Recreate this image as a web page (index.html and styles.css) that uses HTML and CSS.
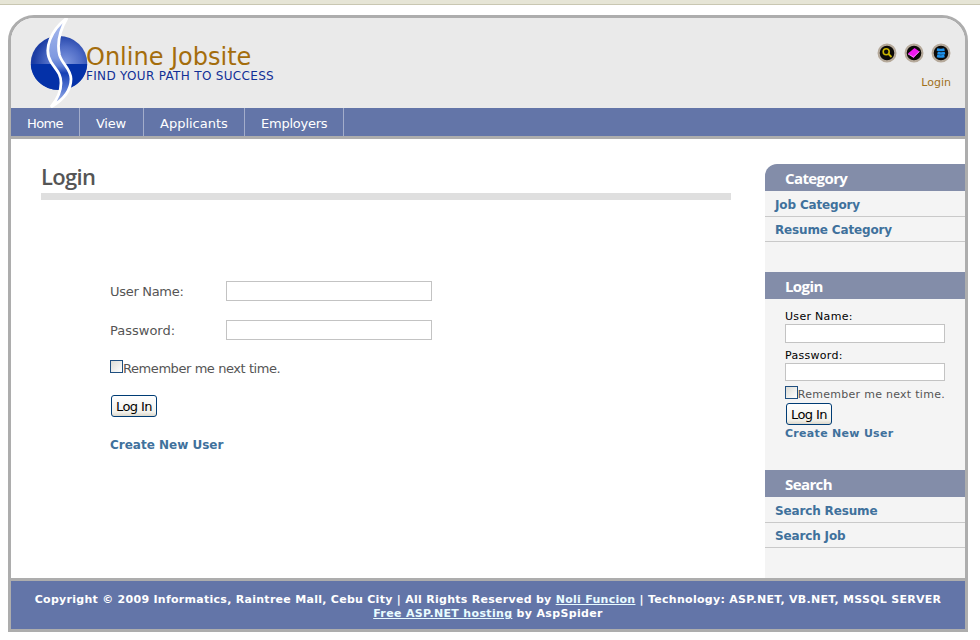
FILE: index.html
```html
<!DOCTYPE html>
<html lang="en">
<head>
  <meta charset="UTF-8" />
  <title>Online Jobsite - Login</title>
  <link rel="stylesheet" href="styles.css">
</head>
<body>
  <div class="wrapper">
    <div class="header">
      <svg class="logo" width="60" height="90" viewBox="0 0 60 90">
        <defs>
          <radialGradient id="shine" cx="0.6" cy="0.5" r="0.55">
            <stop offset="0" stop-color="#8199e0" />
            <stop offset="0.55" stop-color="#4f6cc6" />
            <stop offset="1" stop-color="#1c3da4" />
          </radialGradient>
          <linearGradient id="ribbon" x1="0" y1="0" x2="0" y2="1">
            <stop offset="0" stop-color="#a9bbee" />
            <stop offset="0.45" stop-color="#7f99e0" />
            <stop offset="0.54" stop-color="#5c7cd4" />
            <stop offset="0.62" stop-color="#1740b4" />
            <stop offset="0.8" stop-color="#5577d2" />
            <stop offset="1" stop-color="#c4cff2" />
          </linearGradient>
        </defs>
        <ellipse cx="29" cy="45" rx="28.2" ry="27" fill="url(#shine)" />
        <path d="M0.8 46H57.2C57 60 45 72 29 72C13 72 1 60 0.8 46Z" fill="#0431a8" />
        <path d="M37 0C21 12 13 31 21 44C26 52 31 55 31 65C31 75 26 83 21 89C33 82 41 73 41 61C41 51 32 46 29.5 37C27 26 30 12 37 0Z" fill="url(#ribbon)" stroke="#fff" stroke-width="2.8" />
      </svg>
      <div class="title">
        <h1>Online Jobsite</h1>
        <p>FIND YOUR PATH TO SUCCESS</p>
      </div>
      <div class="tools">
        <div class="icons">
          <svg width="20" height="20" viewBox="0 0 20 20">
            <circle cx="10" cy="10" r="8.4" fill="#0c0a08" stroke="#b5a99a" stroke-width="2.2" />
            <circle cx="9.2" cy="8.8" r="3" fill="none" stroke="#c8b400" stroke-width="1.6" />
            <path d="M11.5 11L14.5 14" stroke="#c8b400" stroke-width="1.8" />
          </svg>
          <svg width="20" height="20" viewBox="0 0 20 20">
            <circle cx="10" cy="10" r="8.4" fill="#0c0a08" stroke="#b5a99a" stroke-width="2.2" />
            <path d="M4 10.5L10.5 5L15.5 8.5L9.5 15Z" fill="#f018f0" />
            <path d="M4 11L9.5 14L15.5 8.5" fill="none" stroke="#ffa0ff" stroke-width="0.8" />
          </svg>
          <svg width="20" height="20" viewBox="0 0 20 20">
            <circle cx="10" cy="10" r="8.4" fill="#0c0a08" stroke="#b5a99a" stroke-width="2.2" />
            <path d="M6 6.5Q10 7.5 13.5 6.5M6.5 10Q10 11 14 10M6 13Q10 14 13.5 13" fill="none" stroke="#1e90e8" stroke-width="2.4" />
          </svg>
        </div>
        <a href="#">Login</a>
      </div>
    </div>

    <ul class="nav">
      <li class="home"><a href="#">Home</a></li>
      <li class="view"><a href="#">View</a></li>
      <li class="applicants"><a href="#">Applicants</a></li>
      <li class="employers"><a href="#">Employers</a></li>
    </ul>

    <div class="content">
      <div class="main">
        <h2>Login</h2>
        <form class="login-form">
          <div class="row">
            <label for="username">User Name:</label>
            <input type="text" id="username" />
          </div>
          <div class="row">
            <label for="password">Password:</label>
            <input type="password" id="password" />
          </div>
          <div class="remember">
            <input type="checkbox" id="remember" /><label for="remember">Remember me next time.</label>
          </div>
          <button type="button">Log In</button>
          <a href="#">Create New User</a>
        </form>
      </div>

      <div class="sidebar">
        <h3 class="first">Category</h3>
        <ul>
          <li><a href="#">Job Category</a></li>
          <li><a href="#">Resume Category</a></li>
        </ul>
        <h3>Login</h3>
        <form class="side-form">
          <label for="side-username">User Name:</label>
          <input type="text" id="side-username" />
          <label for="side-password">Password:</label>
          <input type="password" id="side-password" />
          <div class="remember">
            <input type="checkbox" id="side-remember" /><label for="side-remember">Remember me next time.</label>
          </div>
          <button type="button">Log In</button>
          <a href="#">Create New User</a>
        </form>
        <h3>Search</h3>
        <ul>
          <li><a href="#">Search Resume</a></li>
          <li><a href="#">Search Job</a></li>
        </ul>
      </div>
    </div>

    <div class="footer">
      <p class="copyright">Copyright © 2009 Informatics, Raintree Mall, Cebu City | All Rights Reserved by <a href="#">Noli Funcion</a> | Technology: ASP.NET, VB.NET, MSSQL SERVER</p>
      <p><a href="#">Free ASP.NET hosting</a> by AspSpider</p>
    </div>
  </div>
</body>
</html>
```
FILE: styles.css
```css
* {
  box-sizing: border-box;
}

body {
  margin: 0;
  height: 640px;
  overflow: hidden;
  border-top: 4px solid #e6e5d6;
  background: #fff;
  font-family: Verdana, "DejaVu Sans", sans-serif;
  font-size: 12px;
  color: #555;
}

body::before {
  content: "";
  display: block;
  height: 1px;
  background: #c9c7b2;
}

h1, h2, h3, p, ul {
  margin: 0;
  padding: 0;
  font-weight: normal;
}

ul {
  list-style: none;
}

a {
  text-decoration: none;
}

.wrapper {
  width: 960px;
  height: 617px;
  margin: 10px 0 0 8px;
  border: 3px solid #adadad;
  border-radius: 26px 26px 0 0;
  overflow: hidden;
}

.header {
  display: flex;
  height: 90px;
  padding: 0 14px 0 19px;
  background: #eaeaea;
}

.title {
  margin-left: -4px;
  padding-top: 26px;
  white-space: nowrap;
}

.title h1 {
  font-size: 24px;
  line-height: 26px;
  color: #a46d0c;
}

.title p {
  font-size: 12px;
  line-height: 13px;
  letter-spacing: 0.32px;
  color: #112f96;
}

.tools {
  margin-left: auto;
  padding-top: 25px;
  text-align: right;
}

.icons {
  display: flex;
  gap: 7px;
}

.tools a {
  display: block;
  margin-top: 13px;
  font-size: 11px;
  line-height: 14px;
  color: #a0701a;
}

.nav {
  display: flex;
  height: 31px;
  background: #6375a8;
  border-bottom: 3px solid #adadad;
}

.nav li {
  padding-left: 16px;
  border-right: 1px solid #a3adcb;
  line-height: 31px;
}

.nav a {
  font-size: 13px;
  letter-spacing: -0.25px;
  color: #fff;
}

.home {
  width: 69px;
}

.view {
  width: 64px;
}

.applicants {
  width: 101px;
}

.employers {
  width: 99px;
}

.nav .home a {
  letter-spacing: -0.6px;
}

.nav .applicants a {
  letter-spacing: 0;
}

.content {
  display: flex;
  height: 439px;
}

.main {
  width: 754px;
  padding: 22px 34px 0 30px;
}

.main h2 {
  height: 39px;
  border-bottom: 7px solid #dfdfdf;
  font-family: "Trebuchet MS", "Open Sans", sans-serif;
  font-size: 22px;
  font-weight: 600;
  line-height: 31px;
  letter-spacing: -0.7px;
}

.login-form {
  padding: 81px 0 0 69px;
}

.row {
  display: flex;
  align-items: center;
  height: 20px;
  margin-bottom: 19px;
  font-size: 13px;
}

.row label {
  width: 116px;
}

.row label[for="username"] {
  letter-spacing: -0.3px;
}

input[type="text"],
input[type="password"] {
  width: 206px;
  height: 20px;
  padding: 0;
  background: #fff;
  border: 1px solid #c3c3c3;
}

input[type="checkbox"] {
  appearance: none;
  width: 13px;
  height: 13px;
  margin: 0;
  border: 1px solid #1f4f80;
  background: linear-gradient(135deg, #dcdcd6, #fff);
}

.remember {
  display: flex;
  height: 17px;
  font-size: 13px;
  line-height: 18px;
  letter-spacing: -0.43px;
  white-space: nowrap;
}

button {
  display: block;
  width: 46px;
  height: 22px;
  margin-left: 1px;
  padding: 0;
  border: 1px solid #003c74;
  border-radius: 3px;
  background: linear-gradient(#fff, #f3f2ec 80%, #dcd8cb);
  font-family: Tahoma, "DejaVu Sans", sans-serif;
  font-size: 13px;
  letter-spacing: -0.6px;
  white-space: nowrap;
  color: #000;
}

.login-form .remember {
  margin-top: 20px;
}

.login-form button {
  margin-top: 18px;
}

.login-form a,
.side-form a {
  display: block;
  font-weight: bold;
  color: #40719c;
}

.login-form a {
  margin-top: 19px;
  line-height: 18px;
}

.sidebar {
  width: 200px;
  padding-top: 25px;
  background: linear-gradient(#fff 37px, #f4f4f4 37px);
}

.sidebar h3 {
  height: 27px;
  padding-left: 20px;
  background: #838da9;
  font-family: "Trebuchet MS", "Open Sans", sans-serif;
  font-size: 15px;
  font-weight: bold;
  line-height: 29px;
  letter-spacing: -0.6px;
  color: #fff;
}

.sidebar .first {
  border-top-left-radius: 12px;
}

.sidebar ul {
  height: 81px;
  padding-top: 1px;
}

.sidebar li {
  height: 25px;
  padding-left: 10px;
  border-bottom: 1px solid #c9c9c9;
  line-height: 26px;
}

.sidebar li a {
  font-weight: bold;
  letter-spacing: -0.15px;
  color: #40719c;
}

.side-form {
  height: 171px;
  padding: 10px 20px 0;
  font-size: 11px;
  letter-spacing: 0.3px;
}

.side-form > label {
  display: block;
  height: 15px;
  line-height: 15px;
  color: #000;
}

.side-form input[type="text"],
.side-form input[type="password"] {
  display: block;
  width: 160px;
  height: 19px;
  margin-bottom: 5px;
}

.side-form input[type="password"] {
  height: 18px;
}

.side-form .remember {
  font-size: 11px;
  letter-spacing: 0.28px;
}

.side-form a {
  font-size: 11px;
  line-height: 17px;
}

.footer {
  height: 51px;
  padding-top: 12px;
  border-top: 3px solid #adadad;
  background: #6375a8;
  font-size: 11px;
  line-height: 14px;
  letter-spacing: 0.34px;
  text-align: center;
  white-space: nowrap;
  color: #fff;
}

.footer p {
  font-weight: bold;
}

.footer .copyright {
  letter-spacing: 0.28px;
}

.footer a {
  color: #e8fbff;
  text-decoration: underline;
}
```
